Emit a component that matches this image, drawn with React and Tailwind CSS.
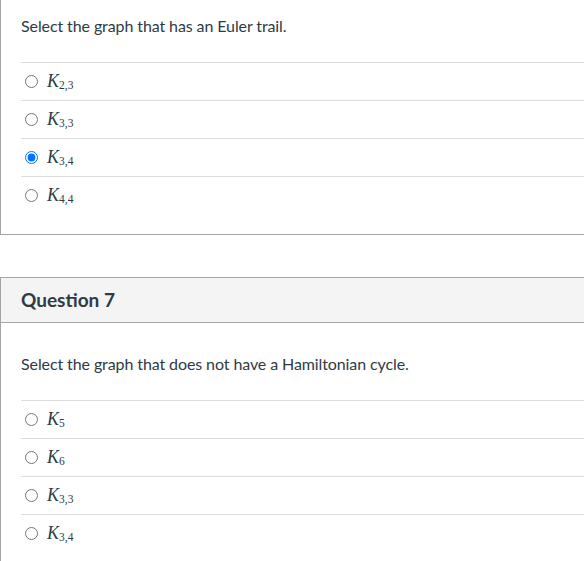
import React from 'react';

const font = { fontFamily: 'Lato, "Open Sans", sans-serif' };

function MathLabel({ base, sub }) {
    return (
        <span className="text-[#2d3b45] text-[18px] leading-none" style={{ fontFamily: '"Liberation Serif", "DejaVu Serif", serif' }}>
            <i>{base}</i>
            <sub className="text-[11.5px] not-italic relative top-[2px] align-baseline">{sub}</sub>
        </span>
    );
}

function Answer({ sub, checked }) {
    return (
        <div className="flex items-center h-[38px] border-t border-[#dcdcdc]">
            <input
                type="radio"
                readOnly
                checked={!!checked}
                className="w-[13px] h-[13px] ml-[4px] mr-[3px] mt-[-1px]"
            />
            <label className="pl-[6px] mb-[2px] flex items-center">
                <MathLabel base="K" sub={sub} />
            </label>
        </div>
    );
}

function QuestionBody({ text, answers, top }) {
    return (
        <div className={`${top} pl-[20px] pb-[20px]`}>
            <p className="text-[16px] leading-[24px] text-[#2d3b45] mb-[24px] tracking-[-0.1px]" style={font}>{text}</p>
            <div>
                {answers.map((a) => (
                    <Answer key={a.sub} sub={a.sub} checked={a.checked} />
                ))}
            </div>
        </div>
    );
}

export default function App() {
    return (
        <div className="w-[584px] h-[561px] overflow-hidden bg-white">
            {/* Question 6 (scrolled) */}
            <div className="border-l border-b border-[#a5a5a5]">
                <QuestionBody
                    top="pt-[14px]"
                    text="Select the graph that has an Euler trail."
                    answers={[
                        { sub: '2,3' },
                        { sub: '3,3' },
                        { sub: '3,4', checked: true },
                        { sub: '4,4' },
                    ]}
                />
            </div>

            {/* Question 7 */}
            <div className="mt-[42px] border-l border-t border-[#a5a5a5]">
                <div className="h-[45px] bg-[#f4f4f4] border-b border-[#a5a5a5] flex items-center pl-[20px]">
                    <h2 className="text-[19px] font-bold text-[#2d3b45]" style={font}>Question 7</h2>
                </div>
                <QuestionBody
                    top="pt-[29px]"
                    text="Select the graph that does not have a Hamiltonian cycle."
                    answers={[
                        { sub: '5' },
                        { sub: '6' },
                        { sub: '3,3' },
                        { sub: '3,4' },
                    ]}
                />
            </div>
        </div>
    );
}
